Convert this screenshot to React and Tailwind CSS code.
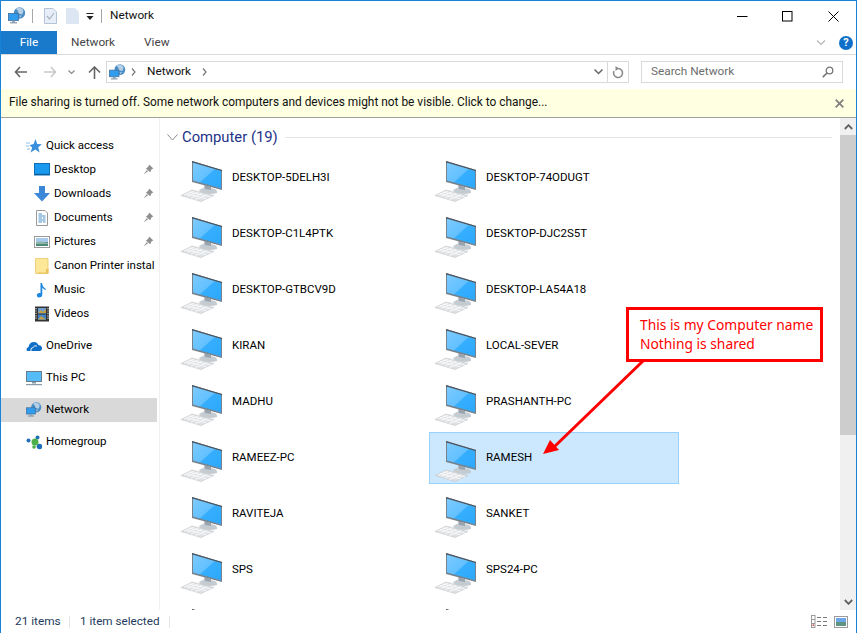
const names = [
  ["DESKTOP-5DELH3I", "DESKTOP-74ODUGT"],
  ["DESKTOP-C1L4PTK", "DESKTOP-DJC2S5T"],
  ["DESKTOP-GTBCV9D", "DESKTOP-LA54A18"],
  ["KIRAN", "LOCAL-SEVER"],
  ["MADHU", "PRASHANTH-PC"],
  ["RAMEEZ-PC", "RAMESH"],
  ["RAVITEJA", "SANKET"],
  ["SPS", "SPS24-PC"],
  ["", ""],
].flat();

function Computer() {
  return (
    <svg width="52" height="52" viewBox="0 0 52 52" className="absolute left-0 top-0">
      <defs>
        <linearGradient id="scr" x1="0" y1="0" x2="1" y2="1">
          <stop offset="0" stopColor="#7ccbff" />
          <stop offset="0.5" stopColor="#62c0ff" />
          <stop offset="0.52" stopColor="#36aeff" />
          <stop offset="1" stopColor="#2ba8fc" />
        </linearGradient>
      </defs>
      <path d="M24 38 L30 35 L40 37 L42 39 L42 41 Q34 43 26 40.5 Z" fill="#c4ccd2" />
      <path d="M29 33 L36 35 L36 38 L30 37 Z" fill="#9aa5ad" />
      <path d="M6 43.5 L17 38 L39 43.5 L26 49.5 Z" fill="#dfe2e5" stroke="#c2c5c8" strokeWidth="0.6" />
      <path d="M9 43 L19 39 M12 44.5 L23 40 M16 46 L27 41.5 M20 47.5 L32 43 M11 41.5 L32 47 M14 40 L36 45 " stroke="#fbfbfb" strokeWidth="0.8" fill="none" />
      <path d="M17 9 L47 18 L47 38 L17 30 Z" fill="#77828c" />
      <path d="M17 9 L47 18 L47 19.2 L17 10.5 Z" fill="#4a5560" />
      <path d="M18 10.8 L46 19 L46 36.2 L18 28.6 Z" fill="url(#scr)" />
    </svg>
  );
}

function Tile({ name, selected }) {
  return (
    <div className={`relative h-[52px] w-[250px] ${selected ? "bg-[#cce8ff] outline outline-1 -outline-offset-1 outline-[#99d1ff]" : ""}`}>
      <Computer />
      <div className="absolute left-[57px] top-[17px] text-[11.5px] leading-[16px] text-black">{name}</div>
    </div>
  );
}

function NetIcon({ size = 18 }) {
  return (
    <svg width={size} height={size} viewBox="0 0 18 18">
      <circle cx="11.5" cy="6" r="5.7" fill="#4a8cc4" />
      <path d="M8 2 Q11 4 10 6.5 L14 7.5 Q16 5 15 2.5 Q11 -1 8 2 Z" fill="#b4cfe6" />
      <path d="M11 8.5 L14 8.5 L12 11 Z" fill="#9cc0de" />
      <rect x="0.5" y="6.5" width="10" height="7" fill="#2f9cf0" stroke="#3f6f9a" strokeWidth="0.8" />
      <rect x="4" y="13.5" width="3" height="1.8" fill="#8fa4b6" />
      <rect x="2" y="15.2" width="7" height="1.2" fill="#7f96aa" />
    </svg>
  );
}

const S = ({ w = 16, h = 16, children }) => <svg width={w} height={h} viewBox={`0 0 ${w} ${h}`}>{children}</svg>;

const Star = () => (
  <S>
    <path d="M9.5 1 L11.2 6 L16 6.2 L12.2 9.2 L13.6 14.5 L9.3 11.5 L4.6 14.5 L6.2 9.4 L3.5 7.2 L7.6 6 Z" fill="#3a8fdd" />
    <path d="M0 5 H4 M0 8 H3 M1 11 H4" stroke="#8cc0ec" strokeWidth="1" />
  </S>
);
const Desk = () => (
  <S>
    <rect x="0.5" y="1.5" width="15" height="11.5" fill="#1a9aee" stroke="#0f6fb5" />
    <rect x="1" y="11.8" width="14" height="1.2" fill="#0b5c9a" />
  </S>
);
const Down = () => (
  <S>
    <path d="M5 0 H11 V7 H16 L8 15.5 L0 7 H5 Z" fill="#3b88d8" />
  </S>
);
const Docs = () => (
  <S>
    <path d="M2.5 0.5 H11 L13.5 3 V15.5 H2.5 Z" fill="#fff" stroke="#9a9a9a" />
    <path d="M4.5 4 H8 M4.5 6 H11.5 M4.5 8 H8 M9 8 H11.5 M4.5 10 H11.5 M4.5 12 H8 M9 12 H11.5" stroke="#4a8fc8" strokeWidth="1" />
  </S>
);
const Pics = () => (
  <S>
    <rect x="0.5" y="2.5" width="15" height="11" fill="#fff" stroke="#9a9a9a" />
    <rect x="2" y="4" width="12" height="4" fill="#a8c9ee" />
    <rect x="2" y="8" width="12" height="4" fill="#4f8a78" />
    <path d="M2 8 Q7 6.5 14 9 V10 H2 Z" fill="#8fb7a8" />
  </S>
);
const Folder = () => (
  <S>
    <path d="M1.5 0.5 H14 V15.5 H1.5 Z" fill="#fde89a" stroke="#e8c766" strokeWidth="0.8" />
    <path d="M12 11 H14.5 V15.5 H4 V14.5 H12 Z" fill="#e8c25c" />
  </S>
);
const Music = () => (
  <S>
    <path d="M6.5 1 H8 Q8.5 5 12 7 L11.3 8 Q9.5 7 8.3 5.5 V12.5 Q8.3 15.5 5 15.5 Q2.8 15.5 2.8 13.5 Q2.8 11 5.5 11 Q6.2 11 6.5 11.3 Z" fill="#1c86e0" />
  </S>
);
const Video = () => (
  <S>
    <rect x="1" y="0.5" width="14" height="15" fill="#333" />
    <rect x="4" y="2" width="8" height="5.5" fill="#6f9fd0" />
    <rect x="4" y="8.5" width="8" height="5.5" fill="#3f84c8" />
    <path d="M4 7 L7 4 L9 6 L12 3 V7 Z M4 13.5 L7 10 L12 13.5 Z" fill="#c8a040" />
    <path d="M2 2 V14 M14 2 V14" stroke="#d8d8d8" strokeWidth="1.2" strokeDasharray="1.2 1.2" />
  </S>
);
const Cloud = () => (
  <S>
    <path d="M1 13 Q-0.5 10 2.5 9 Q3.5 4 8 4 Q11 4 12.5 7 Q16.5 7.5 16 11 Q15.5 13 13.5 13 Z" fill="#0f6fc6" />
    <path d="M5 13 Q4 10 7 9.5 Q8.5 7 11 8 " stroke="#fff" strokeWidth="0.9" fill="none" />
  </S>
);
const PC = () => (
  <S>
    <rect x="0.5" y="1.5" width="15" height="10" fill="#55bcf8" stroke="#6a7d8c" />
    <rect x="6" y="12" width="4" height="1.5" fill="#8a9aa8" />
    <rect x="0" y="14" width="16" height="1.2" fill="#8a9aa8" />
  </S>
);
const Home = () => (
  <S>
    <circle cx="2.5" cy="6.5" r="2" fill="#1f6fb8" />
    <circle cx="11.5" cy="3.5" r="2" fill="#1f6fb8" />
    <circle cx="13.5" cy="12.5" r="2.8" fill="#1f6fb8" />
    <circle cx="9" cy="8" r="3.5" fill="#4db04a" />
    <circle cx="8" cy="13" r="1.8" fill="#4db04a" />
  </S>
);
const Pin = () => (
  <svg width="11" height="11" viewBox="0 0 10 10">
    <path d="M5.5 0.5 L9.5 4 L8 4.6 L6.5 7.5 L2.7 4 L5 2.2 Z M3.5 5.5 L0.5 9.5 L4.5 6.5 Z" fill="#8f8f8f" />
  </svg>
);

function NavRow({ icon, label, pin, sub, active, cls = "" }) {
  return (
    <div className={`relative flex h-[24px] w-[156px] items-center whitespace-nowrap text-[11.5px] text-black ${active ? "bg-[#d9d9d9]" : ""} ${cls}`}>
      <div className={`flex w-[16px] shrink-0 justify-center ${sub ? "ml-[33px]" : "ml-[25px]"}`}>{icon}</div>
      <span className="ml-[4px]">{label}</span>
      {pin && <div className="absolute left-[142px] top-[6px]"><Pin /></div>}
    </div>
  );
}

export default function App() {
  return (
    <div className="flex h-[633px] w-[857px] flex-col overflow-hidden border-x border-t border-[#1883d7] bg-white text-[11.8px] [font-family:Roboto,sans-serif]">
      {/* title */}
      <div className="relative flex h-[30px] shrink-0 items-center">
        <div className="ml-[7px]"><NetIcon /></div>
        <div className="ml-[6px] h-[14px] w-px bg-[#a8a8a8]" />
        <div className="ml-[11px]">
          <svg width="13" height="16" viewBox="0 0 13 16">
            <path d="M0.5 0.5 H9 L12.5 4 V15.5 H0.5 Z" fill="#e8eef7" stroke="#b5c3d8" />
            <path d="M3 8 L5.5 11 L10 5" stroke="#a8b4c4" strokeWidth="1.2" fill="none" />
          </svg>
        </div>
        <div className="ml-[9px]">
          <svg width="13" height="16" viewBox="0 0 13 16">
            <path d="M0 0 H9 L13 4 V16 H0 Z" fill="#dde6f3" />
          </svg>
        </div>
        <div className="ml-[7px] mt-[1px]">
          <svg width="8" height="8" viewBox="0 0 8 8">
            <rect x="0.5" y="0" width="7" height="1" fill="#222" />
            <path d="M0.5 3 H7.5 L4 7 Z" fill="#222" />
          </svg>
        </div>
        <div className="ml-[7px] h-[14px] w-px bg-[#a8a8a8]" />
        <div className="ml-[8px] text-[#111]">Network</div>
        <div className="ml-auto mr-[17px] flex items-center">
          <svg width="11" height="11" viewBox="0 0 11 11"><path d="M0 5.5 H10.5" stroke="#000" strokeWidth="1" /></svg>
          <svg className="ml-[34px]" width="11" height="11" viewBox="0 0 11 11"><rect x="0.5" y="0.5" width="9.5" height="9.5" fill="none" stroke="#000" /></svg>
          <svg className="ml-[35px]" width="11" height="11" viewBox="0 0 11 11"><path d="M0.5 0.5 L10.5 10.5 M10.5 0.5 L0.5 10.5" stroke="#000" strokeWidth="1" /></svg>
        </div>
      </div>
      {/* tabs */}
      <div className="flex h-[24px] shrink-0 items-stretch border-b border-[#dadbdc]">
        <div className="flex w-[56px] items-center justify-center bg-[#1979ca] text-white">File</div>
        <div className="ml-[14px] flex items-center text-[#444]">Network</div>
        <div className="ml-[29px] flex items-center text-[#444]">View</div>
        <div className="ml-auto mr-[3px] flex items-center gap-[13px]">
          <svg width="10" height="6" viewBox="0 0 10 6"><path d="M1 0.5 L5 4.5 L9 0.5" stroke="#b5b5b5" strokeWidth="1.1" fill="none" /></svg>
          <div className="flex h-[14px] w-[14px] items-center justify-center rounded-full bg-[#0f6fc9] text-[11px] font-bold leading-none text-white">?</div>
        </div>
      </div>
      {/* address */}
      <div className="flex h-[34px] shrink-0 items-center">
        <div className="ml-[13px]">
          <svg width="13" height="12" viewBox="0 0 13 12"><path d="M6 1 L1.5 6 L6 11 M1.5 6 H13" stroke="#666" strokeWidth="1.6" fill="none" /></svg>
        </div>
        <div className="ml-[17px]">
          <svg width="13" height="12" viewBox="0 0 13 12"><path d="M7 1 L11.5 6 L7 11 M11.5 6 H0" stroke="#c9c9c9" strokeWidth="1.6" fill="none" /></svg>
        </div>
        <div className="ml-[11px]">
          <svg width="7" height="5" viewBox="0 0 7 5"><path d="M0.5 0.5 L3.5 3.5 L6.5 0.5" stroke="#8a8a8a" strokeWidth="1.2" fill="none" /></svg>
        </div>
        <div className="ml-[13px]">
          <svg width="13" height="13" viewBox="0 0 13 13"><path d="M1 6.5 L6.5 1 L12 6.5 M6.5 1 V13" stroke="#666" strokeWidth="1.6" fill="none" /></svg>
        </div>
        <div className="ml-[5px] flex h-[22px] w-[523px] items-center border border-[#d9d9d9]">
          <div className="ml-[2px]"><NetIcon size={17} /></div>
          <svg className="ml-[5px]" width="5" height="8" viewBox="0 0 5 8"><path d="M1 0.5 L4 4 L1 7.5" stroke="#777" strokeWidth="1.2" fill="none" /></svg>
          <span className="ml-[11px] text-[#111]">Network</span>
          <svg className="ml-[11px]" width="5" height="8" viewBox="0 0 5 8"><path d="M1 0.5 L4 4 L1 7.5" stroke="#777" strokeWidth="1.2" fill="none" /></svg>
          <div className="ml-auto mr-[4px]">
            <svg width="9" height="6" viewBox="0 0 9 6"><path d="M0.5 0.5 L4.5 4.5 L8.5 0.5" stroke="#666" strokeWidth="1.5" fill="none" /></svg>
          </div>
          <div className="flex h-full w-[21px] items-center justify-center border-l border-[#d9d9d9]">
            <svg width="12" height="13" viewBox="0 0 12 13">
              <path d="M6 2.5 A4.5 4.5 0 1 1 2 5" stroke="#888" strokeWidth="1.5" fill="none" />
              <path d="M3.5 0 V5 L7 2.5 Z" fill="#888" />
            </svg>
          </div>
        </div>
        <div className="ml-[12px] flex h-[22px] w-[202px] items-center justify-between border border-[#d9d9d9] pl-[9px] pr-[8px]">
          <span className="text-[#6d6d6d]">Search Network</span>
          <svg width="12" height="12" viewBox="0 0 12 12">
            <circle cx="7.5" cy="4.5" r="3.3" fill="none" stroke="#777" strokeWidth="1.3" />
            <path d="M5 7 L0.8 11.2" stroke="#777" strokeWidth="1.7" />
          </svg>
        </div>
      </div>
      {/* info bar */}
      <div className="flex h-[29px] shrink-0 items-center justify-between border-b border-[#a0a0a0] bg-[#ffffe1] pl-[8px] pr-[12px]">
        <span className="text-[11.9px] text-[#111]">File sharing is turned off. Some network computers and devices might not be visible. Click to change...</span>
        <svg width="9" height="9" viewBox="0 0 9 9"><path d="M0.7 0.7 L8.3 8.3 M8.3 0.7 L0.7 8.3" stroke="#808080" strokeWidth="1.8" /></svg>
      </div>
      {/* main */}
      <div className="relative flex min-h-0 flex-1">
        <div className="w-[159px] shrink-0 overflow-hidden border-r border-[#f0f0f0] pt-[16px]">
          <NavRow icon={<Star />} label="Quick access" />
          <NavRow sub icon={<Desk />} label="Desktop" pin />
          <NavRow sub icon={<Down />} label="Downloads" pin />
          <NavRow sub icon={<Docs />} label="Documents" pin />
          <NavRow sub icon={<Pics />} label="Pictures" pin />
          <NavRow sub icon={<Folder />} label="Canon Printer instal" />
          <NavRow sub icon={<Music />} label="Music" />
          <NavRow sub icon={<Video />} label="Videos" />
          <NavRow cls="mt-[8px]" icon={<Cloud />} label="OneDrive" />
          <NavRow cls="mt-[8px]" icon={<PC />} label="This PC" />
          <NavRow cls="mt-[8px]" active icon={<NetIcon size={16} />} label="Network" />
          <NavRow cls="mt-[8px]" icon={<Home />} label="Homegroup" />
        </div>
        <div className="min-w-0 flex-1 overflow-hidden">
          <div className="flex h-[34px] items-center pt-[4px]">
            <svg className="ml-[7px]" width="11" height="7" viewBox="0 0 11 7"><path d="M0.5 0.5 L5.5 6 L10.5 0.5" stroke="#8a8a8a" strokeWidth="1" fill="none" /></svg>
            <span className="ml-[4px] text-[14.8px] leading-none text-[#1e3287]">Computer (19)</span>
            <div className="ml-[7px] mr-[8px] h-px flex-1 bg-[#e5e5e5]" />
          </div>
          <div className="grid grid-cols-[250px_250px] gap-[4px] pl-[15px]">
            {names.map((n, i) => <Tile key={i} name={n} selected={n === "RAMESH"} />)}
          </div>
        </div>
        <div className="flex w-[16px] shrink-0 flex-col bg-[#f0f0f0]">
          <div className="flex h-[17px] items-center justify-center">
            <svg width="9" height="6" viewBox="0 0 9 6"><path d="M0.8 5 L4.5 1.2 L8.2 5" stroke="#606060" strokeWidth="1.8" fill="none" /></svg>
          </div>
          <div className="h-[300px] bg-[#cdcdcd]" />
          <div className="mt-auto flex h-[17px] items-center justify-center">
            <svg width="9" height="6" viewBox="0 0 9 6"><path d="M0.8 1 L4.5 4.8 L8.2 1" stroke="#606060" strokeWidth="1.8" fill="none" /></svg>
          </div>
        </div>
        {/* annotation */}
        <div className="absolute left-[625px] top-[189px] h-[55px] w-[197px] border-[3px] border-[#ff0000] bg-white pl-[11px] pt-[5px] text-[13.8px] leading-[19px] text-[#ff0000] [font-family:'Noto_Sans',sans-serif]">
          This is my Computer name<br />Nothing is shared
        </div>
        <svg className="absolute left-[535px] top-[235px]" width="120" height="110" viewBox="0 0 120 110">
          <path d="M107 8 L17 95" stroke="#ff0000" strokeWidth="3" fill="none" />
          <path d="M7 101 L14 87 L23 97 Z" fill="#ff0000" />
        </svg>
      </div>
      {/* status */}
      <div className="flex h-[23px] shrink-0 items-center">
        <span className="ml-[14px] w-[54px] text-[#1e395b]">21 items</span>
        <div className="h-[12px] w-px bg-[#e5e5e5]" />
        <span className="ml-[10px] w-[89px] text-[11.7px] text-[#1e395b]">1 item selected</span>
        <div className="h-[12px] w-px bg-[#e5e5e5]" />
        <div className="ml-auto mr-[8px] flex items-center gap-[7px]">
          <svg width="16" height="13" viewBox="0 0 16 13">
            <rect x="0.5" y="0.5" width="3.5" height="12" fill="#fff" stroke="#9a9a9a" />
            <path d="M1 4.5 H4 M1 8.5 H4" stroke="#9a9a9a" />
            <rect x="1.5" y="9.5" width="1.5" height="1.5" fill="#d04040" />
            <path d="M6 2.5 H10 M12 2.5 H16 M6 6.5 H10 M12 6.5 H16 M6 10.5 H10 M12 10.5 H16" stroke="#777" />
          </svg>
          <svg width="14" height="12" viewBox="0 0 14 12">
            <rect x="0.5" y="0.5" width="13" height="11" fill="#fff" stroke="#9a9a9a" />
            <rect x="2" y="2" width="10" height="4" fill="#6aa6e8" />
            <rect x="2" y="6" width="10" height="4" fill="#5f9484" />
          </svg>
        </div>
      </div>
    </div>
  );
}
